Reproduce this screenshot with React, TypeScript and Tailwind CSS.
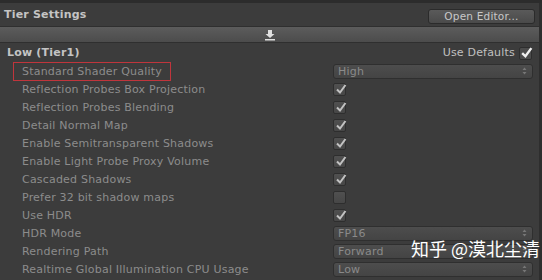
import React from "react";

const Check = ({ on }: { on: boolean }) => (
  <div className="w-[13px] h-[13px] rounded-[2px] border border-[#2e2e2e] bg-gradient-to-b from-[#505050] to-[#474747] relative">
    {on && (
      <svg className="absolute left-[1px] top-[-1px]" width="12" height="12" viewBox="0 0 12 12">
        <path d="M2 6.5 L5 9.5 L10.5 2" stroke="#c2c2c2" strokeWidth="2" fill="none" />
      </svg>
    )}
  </div>
);

const Drop = ({ v }: { v: string }) => (
  <div className="h-[15px] w-[200px] rounded-[3px] border border-[#2f2f2f] bg-gradient-to-b from-[#4d4d4d] to-[#444444] flex items-center justify-between pl-[4px] pr-[5px]">
    <span className="text-[#8a8a8a] leading-none">{v}</span>
    <svg width="5" height="8" viewBox="0 0 5 8">
      <path d="M0.5 3 L2.5 0.5 L4.5 3 Z M0.5 5 L2.5 7.5 L4.5 5 Z" fill="#777" />
    </svg>
  </div>
);

type Row = { label: string; ctrl: React.ReactNode };

const rows: Row[] = [
  { label: "Standard Shader Quality", ctrl: <Drop v="High" /> },
  { label: "Reflection Probes Box Projection", ctrl: <Check on /> },
  { label: "Reflection Probes Blending", ctrl: <Check on /> },
  { label: "Detail Normal Map", ctrl: <Check on /> },
  { label: "Enable Semitransparent Shadows", ctrl: <Check on /> },
  { label: "Enable Light Probe Proxy Volume", ctrl: <Check on /> },
  { label: "Cascaded Shadows", ctrl: <Check on /> },
  { label: "Prefer 32 bit shadow maps", ctrl: <Check on={false} /> },
  { label: "Use HDR", ctrl: <Check on /> },
  { label: "HDR Mode", ctrl: <Drop v="FP16" /> },
  { label: "Rendering Path", ctrl: <Drop v="Forward" /> },
  { label: "Realtime Global Illumination CPU Usage", ctrl: <Drop v="Low" /> },
];

export default function App() {
  return (
    <div
      className="w-[542px] h-[280px] bg-[#3c3c3c] overflow-hidden relative text-[11px] tracking-[0.2px]"
      style={{ fontFamily: '"DejaVu Sans", sans-serif' }}
    >
      <div className="h-[3px] bg-[#2c2c2c]" />
      <div className="flex pr-[4px] border-r-[3px] border-[#2e2e2e] h-[277px] flex-col">
        <div className="flex items-center justify-between h-[23px] pl-[4px] pt-[2px]">
          <span className="font-bold text-[#c4c4c4] text-[11px]">Tier Settings</span>
          <div className="w-[107px] h-[15px] rounded-[3px] border border-[#2b2b2b] bg-gradient-to-b from-[#5a5a5a] to-[#4a4a4a] flex items-center justify-center text-[#c8c8c8] text-[10.5px] leading-none mt-[1px]">
            Open Editor...
          </div>
        </div>
        <div className="h-[17px] -mr-[4px] bg-gradient-to-b from-[#5c5c5c] to-[#4c4c4c] border-t border-b border-[#2f2f2f] flex items-center justify-center">
          <svg width="12" height="12" viewBox="0 0 12 12">
            <path d="M4 1 H8 V5 H10.5 L6 9 L1.5 5 H4 Z" fill="#e0e0e0" />
            <rect x="1" y="10" width="10" height="1.5" fill="#e0e0e0" />
          </svg>
        </div>
        <div className="flex items-center justify-between h-[19px] pl-[7px] pr-[3px] pt-[1px]">
          <span className="font-bold text-[#c4c4c4]">Low (Tier1)</span>
          <div className="flex items-center gap-[4px]">
            <span className="text-[#c0c0c0]">Use Defaults</span>
            <div className="w-[13px] h-[13px] rounded-[2px] border border-[#2e2e2e] bg-[#4c4c4c] relative">
              <svg className="absolute left-[0px] top-[-2px]" width="13" height="13" viewBox="0 0 12 12">
                <path d="M2 6.5 L5 9.5 L10.5 2" stroke="#f0f0f0" strokeWidth="2.2" fill="none" />
              </svg>
            </div>
          </div>
        </div>
        <div className="flex flex-col">
          {rows.map((r, i) => (
            <div key={i} className="flex items-center h-[18px]">
              <div className="w-[332px] pl-[22px] text-[#8c8c8c] leading-none relative">
                {i === 0 && (
                  <div className="absolute left-[13px] top-[-4px] w-[158px] h-[19px] border border-[#c0353c]" />
                )}
                {r.label}
              </div>
              <div className="pl-[1px]">{r.ctrl}</div>
            </div>
          ))}
        </div>
      </div>
      <div
        className="absolute left-[411px] top-[239px] text-white text-[18px] leading-none tracking-normal"
        style={{ fontFamily: '"Noto Sans CJK SC", sans-serif' }}
      >
        知乎 @漠北尘清
      </div>
    </div>
  );
}
